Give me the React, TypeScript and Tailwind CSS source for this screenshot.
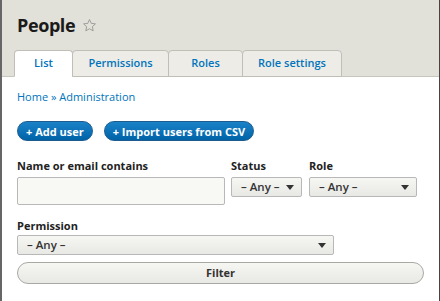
import React from 'react';

const font = { fontFamily: '"Open Sans", "Liberation Sans", sans-serif' };

function Caret() {
  return (
    <svg width="8" height="5" viewBox="0 0 8 5" className="shrink-0">
      <path d="M0 0 L8 0 L4 5 Z" fill="#333" />
    </svg>
  );
}

function Select({ className }: { className: string }) {
  return (
    <div className={`flex items-center justify-between h-[20px] pl-[9px] pr-[7px] border border-[#b8b8b8] rounded-[2px] bg-gradient-to-b from-[#f6f6f3] to-[#e8e8e4] text-[11.5px] font-semibold text-[#333] ${className}`}>
      <span>– Any –</span>
      <Caret />
    </div>
  );
}

export default function App() {
  const tabs = ['List', 'Permissions', 'Roles', 'Role settings'];
  const widths = ['w-[59px]', 'w-[97px]', 'w-[75px]', 'w-[100px]'];
  return (
    <div style={font} className="w-[440px] h-[301px] bg-white border-l-2 border-l-[#666] border-r border-r-[#444] overflow-hidden">
      <div className="bg-[#e1e0d9] h-[77px] border-b border-[#c6c5be] flex flex-col">
        <div className="flex items-center gap-[7px] pl-[15px] pt-[8px] h-[42px]">
          <h1 className="text-[18px] font-bold text-[#1a1a1a] leading-none tracking-[-0.4px]">People</h1>
          <svg width="15" height="15" viewBox="0 0 24 24" className="mt-[1px]">
            <path d="M12 2.5 L14.9 8.6 L21.5 9.4 L16.6 13.9 L17.9 20.5 L12 17.2 L6.1 20.5 L7.4 13.9 L2.5 9.4 L9.1 8.6 Z" fill="none" stroke="#9a9a95" strokeWidth="1.5" strokeLinejoin="round" />
          </svg>
        </div>
        <div className="flex items-end pl-[12px] mt-auto -mb-px">
          {tabs.map((t, i) => (
            <div
              key={t}
              className={`${widths[i]} h-[27px] flex items-center justify-center text-[11px] font-semibold text-[#0074bd] rounded-t-[4px] border border-[#bfbeb7] ${i === 0 ? 'bg-white border-b-white' : 'bg-[#edece6] -ml-px'}`}
            >
              {t}
            </div>
          ))}
        </div>
      </div>

      <div className="px-[15px]">
        <div className="pt-[13px] text-[11px] text-[#0074bd] leading-[14px]">Home » Administration</div>

        <div className="flex gap-[11px] mt-[17px]">
          <button className="h-[20px] px-[8px] rounded-full bg-gradient-to-b from-[#1a82c7] to-[#0063a8] border border-[#1e5c90] text-white text-[11px] font-bold leading-none">
            + Add user
          </button>
          <button className="h-[20px] px-[8px] rounded-full bg-gradient-to-b from-[#1a82c7] to-[#0063a8] border border-[#1e5c90] text-white text-[11px] font-bold leading-none">
            + Import users from CSV
          </button>
        </div>

        <div className="flex mt-[18px] gap-[6px]">
          <div className="flex flex-col w-[208px]">
            <label className="text-[11px] font-bold text-[#222] leading-[14px]">Name or email contains</label>
            <div className="mt-[4px] h-[28px] border border-[#b8b8b8] rounded-[2px] bg-[#f8f8f5]" />
          </div>
          <div className="flex flex-col">
            <label className="text-[11px] font-bold text-[#222] leading-[14px]">Status</label>
            <Select className="mt-[4px] w-[71px]" />
          </div>
          <div className="flex flex-col ml-[1px]">
            <label className="text-[11px] font-bold text-[#222] leading-[14px]">Role</label>
            <Select className="mt-[4px] w-[108px]" />
          </div>
        </div>

        <div className="mt-[14px] flex flex-col">
          <label className="text-[11px] font-bold text-[#222] leading-[14px]">Permission</label>
          <Select className="mt-[2px] w-[317px]" />
        </div>

        <button className="mt-[7px] w-[407px] h-[22px] rounded-full border border-[#a8a8a4] bg-gradient-to-b from-[#f6f6f3] to-[#e8e8e4] text-[11px] font-bold text-[#333]">
          Filter
        </button>
      </div>
    </div>
  );
}
